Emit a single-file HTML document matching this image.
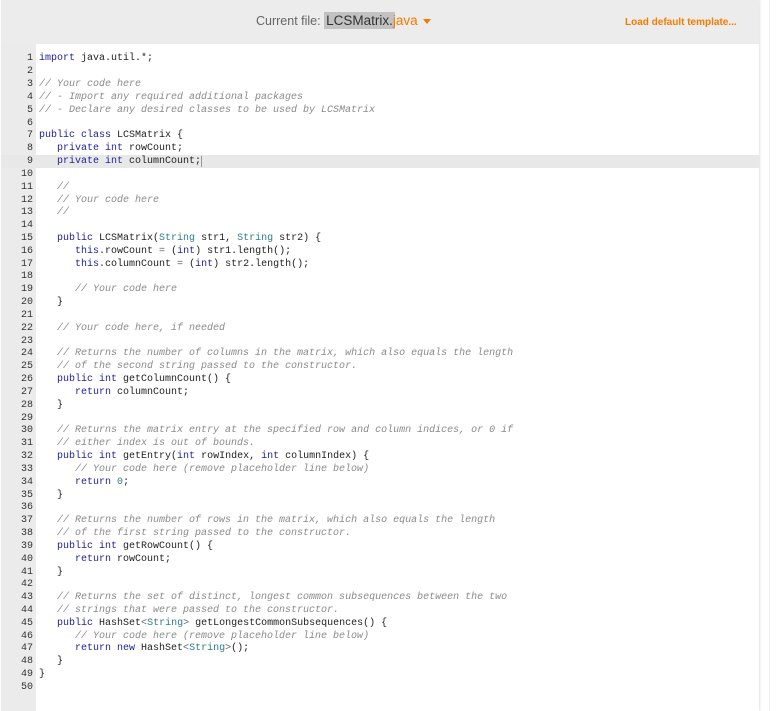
<!DOCTYPE html>
<html><head><meta charset="utf-8"><style>
*{margin:0;padding:0;box-sizing:border-box}
html,body{width:780px;height:711px;overflow:hidden}
body{background:#fff;position:relative;font-family:"Liberation Sans",sans-serif}
#panel{position:absolute;left:1px;top:0;width:758px;height:711px;background:#fff;box-shadow:1px 0 2px rgba(0,0,0,.12)}
#hdr{position:absolute;left:0;top:0;width:758px;height:44px;background:#ececec}
#cur{position:absolute;left:255px;top:13px;font-size:12.5px;color:#666;white-space:nowrap}
#cur .f{color:#333;background:#c2c2c2;padding:1px 2px;font-size:13.5px}
#cur .j{color:#f57c00;font-size:13.5px;margin-left:-2px}
#cur .c{display:inline-block;width:0;height:0;border-left:4px solid transparent;border-right:4px solid transparent;border-top:5px solid #f57c00;margin-left:5px;vertical-align:middle}
#load{position:absolute;left:624px;top:17px;font-size:10px;font-weight:bold;color:#f57c00}
#gut{position:absolute;left:0;top:44px;width:35px;height:667px;background:#ebebeb}
#hl{position:absolute;left:0;top:155px;width:758px;height:13px;background:#e8e8e8}
#code{position:absolute;left:0;top:53.4px;font-family:"Liberation Mono",monospace;font-size:10px;line-height:12.83px;color:#222}
.l{height:12.83px;white-space:pre}
.n{display:inline-block;width:32px;text-align:right;color:#333;margin-right:6px}
.k{color:#22229a}.s{color:#2e7d8c}.c2{color:#8a8a8a;font-style:italic}.p{color:#666}
</style></head><body>
<div style="position:absolute;left:769px;top:0;width:1px;height:711px;background:#eee"></div>
<div id="panel">
<div id="hdr"><div id="cur">Current file: <span class="f">LCSMatrix.</span><span class="j">java</span><span class="c"></span></div><div id="load">Load default template...</div></div>
<div id="gut"></div>
<div id="hl"></div>
<div id="code"><div class="l"><span class="n">1</span><span class="k">import</span> java.util.*;</div><div class="l"><span class="n">2</span></div><div class="l"><span class="n">3</span><span class="c2">// Your code here</span></div><div class="l"><span class="n">4</span><span class="c2">// - Import any required additional packages</span></div><div class="l"><span class="n">5</span><span class="c2">// - Declare any desired classes to be used by LCSMatrix</span></div><div class="l"><span class="n">6</span></div><div class="l"><span class="n">7</span><span class="k">public class</span> LCSMatrix {</div><div class="l"><span class="n">8</span>   <span class="k">private int</span> rowCount;</div><div class="l"><span class="n">9</span>   <span class="k">private int</span> columnCount;<span style="border-left:1px solid #999"></span></div><div class="l"><span class="n">10</span></div><div class="l"><span class="n">11</span>   <span class="c2">//</span></div><div class="l"><span class="n">12</span>   <span class="c2">// Your code here</span></div><div class="l"><span class="n">13</span>   <span class="c2">//</span></div><div class="l"><span class="n">14</span></div><div class="l"><span class="n">15</span>   <span class="k">public</span> LCSMatrix(<span class="s">String</span> str1, <span class="s">String</span> str2) {</div><div class="l"><span class="n">16</span>      <span class="k">this</span>.rowCount <span class="p">=</span> (<span class="k">int</span>) str1.length();</div><div class="l"><span class="n">17</span>      <span class="k">this</span>.columnCount <span class="p">=</span> (<span class="k">int</span>) str2.length();</div><div class="l"><span class="n">18</span></div><div class="l"><span class="n">19</span>      <span class="c2">// Your code here</span></div><div class="l"><span class="n">20</span>   }</div><div class="l"><span class="n">21</span></div><div class="l"><span class="n">22</span>   <span class="c2">// Your code here, if needed</span></div><div class="l"><span class="n">23</span></div><div class="l"><span class="n">24</span>   <span class="c2">// Returns the number of columns in the matrix, which also equals the length</span></div><div class="l"><span class="n">25</span>   <span class="c2">// of the second string passed to the constructor.</span></div><div class="l"><span class="n">26</span>   <span class="k">public int</span> getColumnCount() {</div><div class="l"><span class="n">27</span>      <span class="k">return</span> columnCount;</div><div class="l"><span class="n">28</span>   }</div><div class="l"><span class="n">29</span></div><div class="l"><span class="n">30</span>   <span class="c2">// Returns the matrix entry at the specified row and column indices, or 0 if</span></div><div class="l"><span class="n">31</span>   <span class="c2">// either index is out of bounds.</span></div><div class="l"><span class="n">32</span>   <span class="k">public int</span> getEntry(<span class="k">int</span> rowIndex, <span class="k">int</span> columnIndex) {</div><div class="l"><span class="n">33</span>      <span class="c2">// Your code here (remove placeholder line below)</span></div><div class="l"><span class="n">34</span>      <span class="k">return</span> <span class="s">0</span>;</div><div class="l"><span class="n">35</span>   }</div><div class="l"><span class="n">36</span></div><div class="l"><span class="n">37</span>   <span class="c2">// Returns the number of rows in the matrix, which also equals the length</span></div><div class="l"><span class="n">38</span>   <span class="c2">// of the first string passed to the constructor.</span></div><div class="l"><span class="n">39</span>   <span class="k">public int</span> getRowCount() {</div><div class="l"><span class="n">40</span>      <span class="k">return</span> rowCount;</div><div class="l"><span class="n">41</span>   }</div><div class="l"><span class="n">42</span></div><div class="l"><span class="n">43</span>   <span class="c2">// Returns the set of distinct, longest common subsequences between the two</span></div><div class="l"><span class="n">44</span>   <span class="c2">// strings that were passed to the constructor.</span></div><div class="l"><span class="n">45</span>   <span class="k">public</span> HashSet<span class="p">&lt;</span><span class="s">String</span><span class="p">&gt;</span> getLongestCommonSubsequences() {</div><div class="l"><span class="n">46</span>      <span class="c2">// Your code here (remove placeholder line below)</span></div><div class="l"><span class="n">47</span>      <span class="k">return new</span> HashSet<span class="p">&lt;</span><span class="s">String</span><span class="p">&gt;</span>();</div><div class="l"><span class="n">48</span>   }</div><div class="l"><span class="n">49</span>}</div><div class="l"><span class="n">50</span></div></div>
</div>
</body></html>
